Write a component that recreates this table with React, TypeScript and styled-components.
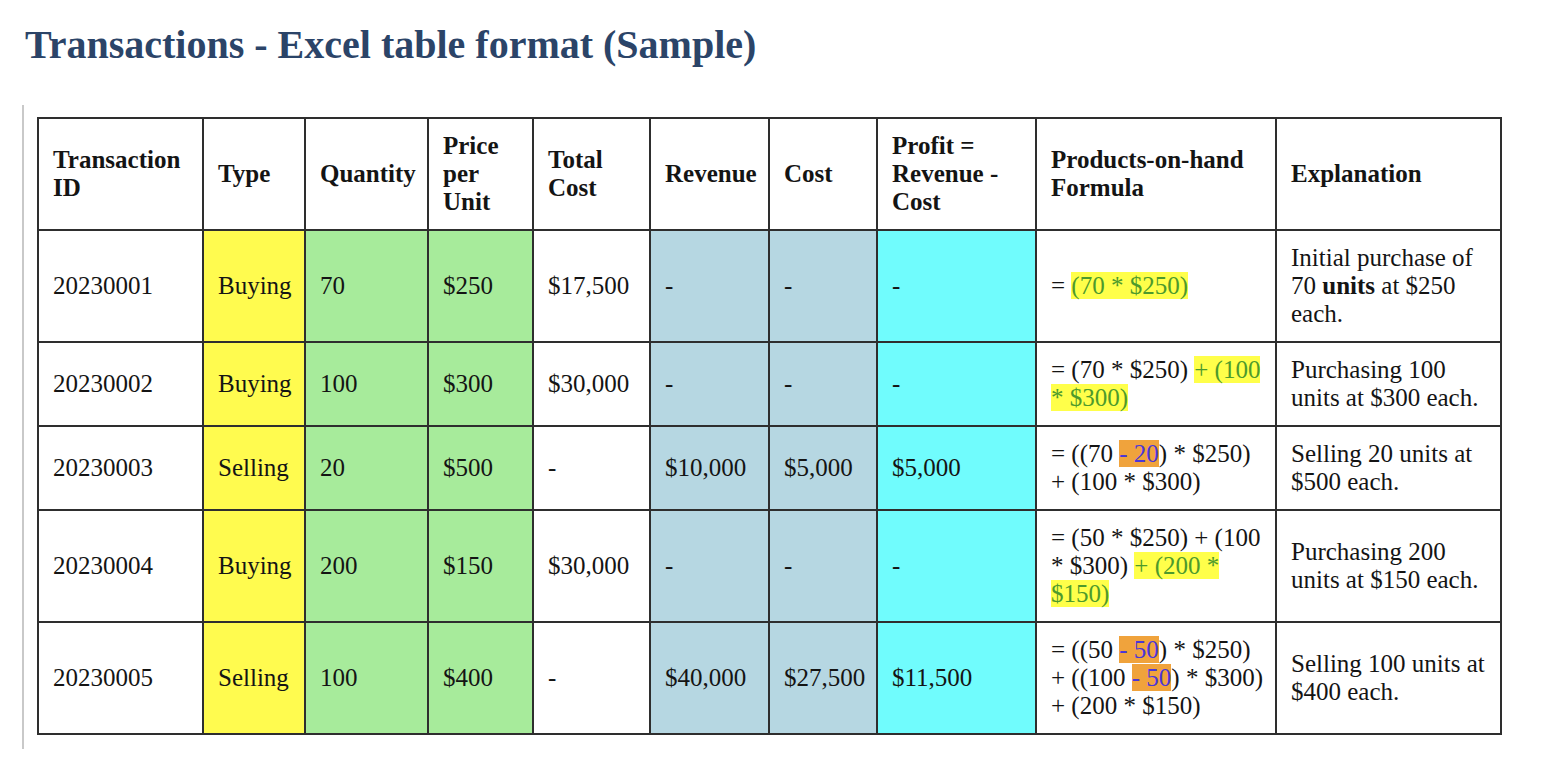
import React from "react";
import styled, { createGlobalStyle } from "styled-components";

const Global = createGlobalStyle`
  html, body { margin: 0; padding: 0; background: #ffffff; }
  body { font-family: "Liberation Serif", "Times New Roman", serif; color: #111; }
`;

const Page = styled.div`
  padding: 20px 0 0 0;
`;

const Title = styled.h1`
  margin: 0 0 35px 25px;
  font-family: "Liberation Serif", "DejaVu Serif", serif;
  font-weight: 700;
  font-size: 40px;
  line-height: 50px;
  letter-spacing: 0;
  color: #2b4468;
`;

const Frame = styled.div`
  margin-left: 22px;
  border-left: 2px solid #c9c9c9;
  padding: 12px 0 14px 13px;
  width: fit-content;
`;

const Table = styled.table`
  border-collapse: collapse;
  table-layout: fixed;
  width: 1463px;
  font-size: 25px;
  line-height: 28px;
  color: #141414;
`;

const HeadCell = styled.th`
  border: 2px solid #2e2e2e;
  padding: 13px 4px 13px 14px;
  text-align: left;
  vertical-align: middle;
  font-weight: 700;
  background: #ffffff;
`;

const tones: Record<string, string> = {
  white: "#ffffff",
  yellow: "#fffb4f",
  green: "#a7eb9b",
  blue: "#b6d7e2",
  cyan: "#70fcfd",
};

const Cell = styled.td<{ $tone?: string }>`
  border: 2px solid #2e2e2e;
  padding: 13px 4px 13px 14px;
  vertical-align: middle;
  background: ${(p) => tones[p.$tone || "white"]};
`;

const FormulaCell = styled(Cell)`
  padding-right: 9px;
`;

const Mark = styled.span<{ $tone: "add" | "sub" }>`
  background: ${(p) => (p.$tone === "add" ? "#ffff4a" : "#f0a33c")};
  color: ${(p) => (p.$tone === "add" ? "#4d9a2c" : "#4a35d8")};
`;

const Strong = styled.b`
  font-weight: 700;
`;

const widths = [165, 102, 123, 105, 117, 119, 108, 159, 240, 225];

const headers = [
  "Transaction ID",
  "Type",
  "Quantity",
  "Price per Unit",
  "Total Cost",
  "Revenue",
  "Cost",
  "Profit = Revenue - Cost",
  "Products-on-hand Formula",
  "Explanation",
];

type Row = {
  id: string;
  type: string;
  qty: string;
  price: string;
  total: string;
  revenue: string;
  cost: string;
  profit: string;
  formula: React.ReactNode;
  explanation: React.ReactNode;
};

const rows: Row[] = [
  {
    id: "20230001",
    type: "Buying",
    qty: "70",
    price: "$250",
    total: "$17,500",
    revenue: "-",
    cost: "-",
    profit: "-",
    formula: (
      <>
        = <Mark $tone="add">(70 * $250)</Mark>
      </>
    ),
    explanation: (
      <>
        Initial purchase of 70 <Strong>units</Strong> at $250 each.
      </>
    ),
  },
  {
    id: "20230002",
    type: "Buying",
    qty: "100",
    price: "$300",
    total: "$30,000",
    revenue: "-",
    cost: "-",
    profit: "-",
    formula: (
      <>
        = (70 * $250) <Mark $tone="add">+ (100 * $300)</Mark>
      </>
    ),
    explanation: "Purchasing 100 units at $300 each.",
  },
  {
    id: "20230003",
    type: "Selling",
    qty: "20",
    price: "$500",
    total: "-",
    revenue: "$10,000",
    cost: "$5,000",
    profit: "$5,000",
    formula: (
      <>
        = ((70 <Mark $tone="sub">- 20</Mark>) * $250) + (100 * $300)
      </>
    ),
    explanation: "Selling 20 units at $500 each.",
  },
  {
    id: "20230004",
    type: "Buying",
    qty: "200",
    price: "$150",
    total: "$30,000",
    revenue: "-",
    cost: "-",
    profit: "-",
    formula: (
      <>
        = (50 * $250) + (100 * $300) <Mark $tone="add">+ (200 * $150)</Mark>
      </>
    ),
    explanation: "Purchasing 200 units at $150 each.",
  },
  {
    id: "20230005",
    type: "Selling",
    qty: "100",
    price: "$400",
    total: "-",
    revenue: "$40,000",
    cost: "$27,500",
    profit: "$11,500",
    formula: (
      <>
        = ((50 <Mark $tone="sub">- 50</Mark>) * $250) + ((100{" "}
        <Mark $tone="sub">- 50</Mark>) * $300) + (200 * $150)
      </>
    ),
    explanation: "Selling 100 units at $400 each.",
  },
];

export default function App() {
  return (
    <Page>
      <Global />
      <Title>Transactions - Excel table format (Sample)</Title>
      <Frame>
        <Table>
          <colgroup>
            {widths.map((w, i) => (
              <col key={i} style={{ width: w }} />
            ))}
          </colgroup>
          <thead>
            <tr>
              {headers.map((h) => (
                <HeadCell key={h}>{h}</HeadCell>
              ))}
            </tr>
          </thead>
          <tbody>
            {rows.map((r) => (
              <tr key={r.id}>
                <Cell>{r.id}</Cell>
                <Cell $tone="yellow">{r.type}</Cell>
                <Cell $tone="green">{r.qty}</Cell>
                <Cell $tone="green">{r.price}</Cell>
                <Cell>{r.total}</Cell>
                <Cell $tone="blue">{r.revenue}</Cell>
                <Cell $tone="blue">{r.cost}</Cell>
                <Cell $tone="cyan">{r.profit}</Cell>
                <FormulaCell>{r.formula}</FormulaCell>
                <Cell>{r.explanation}</Cell>
              </tr>
            ))}
          </tbody>
        </Table>
      </Frame>
    </Page>
  );
}
